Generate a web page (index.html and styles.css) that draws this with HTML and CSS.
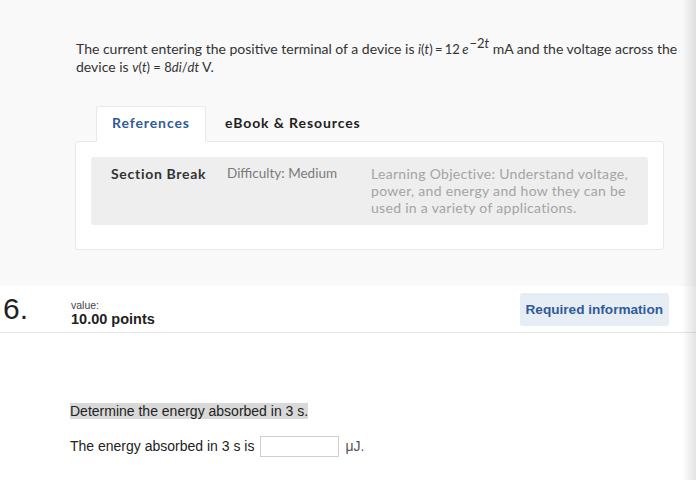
FILE: index.html
```html
<!DOCTYPE html>
<html>
<head>
<meta charset="utf-8">
<link rel="stylesheet" href="styles.css">
</head>
<body>
<div class="page">
  <section class="intro">
    <p class="problem">The current entering the positive terminal of a device is <span class="math"><i>i</i>(<i>t</i>) = 12 <i>e</i><sup>−2<i>t</i></sup></span> mA and the voltage across the device is <span class="math2"><i>v</i>(<i>t</i>) = 8<i>di</i>/<i>dt</i></span> V.</p>
    <div class="tabs">
      <div class="tab active">References</div>
      <div class="tab">eBook &amp; Resources</div>
    </div>
    <div class="panel">
      <div class="meta">
        <div class="meta-title">Section Break</div>
        <div class="meta-diff">Difficulty: Medium</div>
        <div class="meta-lo">Learning Objective: Understand voltage, power, and energy and how they can be used in a variety of applications.</div>
      </div>
    </div>
  </section>
  <section class="qhead">
    <div class="qnum">6.</div>
    <div class="qvalue">
      <div class="vlabel">value:</div>
      <div class="vpoints">10.00 points</div>
    </div>
    <div class="reqbtn">Required information</div>
  </section>
  <section class="qbody">
    <p class="prompt"><span class="hl">Determine the energy absorbed in 3 s.</span></p>
    <p class="answer"><span>The energy absorbed in 3 s is</span><span class="inbox"></span><span class="unit">μJ.</span></p>
  </section>
  <div class="edge"></div>
</div>
</body>
</html>
```
FILE: styles.css
```css
html, body {
  margin: 0;
  padding: 0;
  background: #ffffff;
}
.page {
  position: relative;
  width: 696px;
  height: 480px;
  overflow: hidden;
}
.intro {
  background: #f9f9f9;
  height: 286px;
  padding: 40px 0 0 76px;
  box-sizing: border-box;
  font-family: "Lato", "Liberation Sans", sans-serif;
  color: #333;
}
.problem {
  margin: 0;
  font-size: 14px;
  line-height: 17px;
  width: 612px;
}
.math {
  font-size: 13px;
  word-spacing: -1px;
}
.math2 {
  font-size: 13px;
}
.problem sup {
  font-size: 13px;
  line-height: 0;
  vertical-align: 6px;
  margin-left: 1px;
}
.tabs {
  display: flex;
  margin: 30px 0 0 20px;
  height: 35px;
}
.tab {
  font-weight: bold;
  font-size: 14px;
  line-height: 17px;
  letter-spacing: 0.9px;
  padding: 7px 15px 0 15px;
  box-sizing: border-box;
  color: #222;
}
.tab.active {
  width: 110px;
  height: 36px;
  padding-left: 15px;
  background: #fff;
  border: 1px solid #e9e9e9;
  border-bottom: none;
  border-radius: 3px 3px 0 0;
  color: #2e5b99;
  position: relative;
  z-index: 1;
}
.tab:not(.active) {
  padding-left: 19px;
  padding-top: 8px;
}
.panel {
  margin-left: -1px;
  width: 589px;
  height: 109px;
  box-sizing: border-box;
  background: #fff;
  border: 1px solid #e9e9e9;
  border-radius: 3px;
  padding: 15px;
}
.meta {
  background: #eeeeee;
  border-radius: 3px;
  height: 68px;
  box-sizing: border-box;
  padding: 8px 20px;
  display: flex;
  font-size: 13.5px;
  line-height: 17px;
}
.meta-title {
  font-weight: bold;
  font-size: 14px;
  letter-spacing: 0.7px;
  color: #333;
  width: 116px;
  flex: none;
}
.meta-diff {
  color: #7a7a7a;
  width: 144px;
  flex: none;
}
.meta-lo {
  color: #a4a4a4;
  font-size: 14px;
  letter-spacing: 0.3px;
  width: 266px;
  flex: none;
}
.qhead {
  display: flex;
  align-items: flex-start;
  height: 47px;
  box-sizing: border-box;
  border-bottom: 1px solid #e6e6e6;
  padding: 0 27px 0 3px;
}
.qnum {
  font-family: "Liberation Sans", sans-serif;
  font-size: 30px;
  line-height: 34px;
  margin-top: 6px;
  color: #222;
  width: 68px;
  flex: none;
}
.qvalue {
  font-family: "Liberation Sans", sans-serif;
  flex: 1;
  padding-top: 13px;
}
.vlabel {
  font-size: 10.5px;
  line-height: 12px;
  color: #444;
}
.vpoints {
  font-size: 14.5px;
  font-weight: bold;
  line-height: 16px;
  color: #222;
}
.reqbtn {
  font-family: "Liberation Sans", sans-serif;
  margin-top: 7px;
  background: #e7edf5;
  color: #2e5b99;
  font-weight: bold;
  font-size: 13.6px;
  border-radius: 3px;
  height: 33px;
  line-height: 33px;
  padding: 0 6px;
}
.qbody {
  padding: 70px 0 0 70px;
  font-family: "Liberation Sans", sans-serif;
  font-size: 14px;
  color: #222;
}
.prompt {
  margin: 0;
  line-height: 17px;
}
.hl {
  background: #d9d9d9;
}
.answer {
  margin: 16px 0 0 0;
  line-height: 21px;
  display: flex;
  align-items: center;
}
.inbox {
  display: block;
  width: 77px;
  height: 19px;
  border: 1px solid #cfcfcf;
  background: #fff;
  margin: 0 6px;
}
.unit {
  color: #555;
}
.edge {
  position: absolute;
  top: 0;
  right: 0;
  width: 14px;
  height: 480px;
  background: linear-gradient(to right, rgba(0,0,0,0), rgba(0,0,0,0.11));
}
```
